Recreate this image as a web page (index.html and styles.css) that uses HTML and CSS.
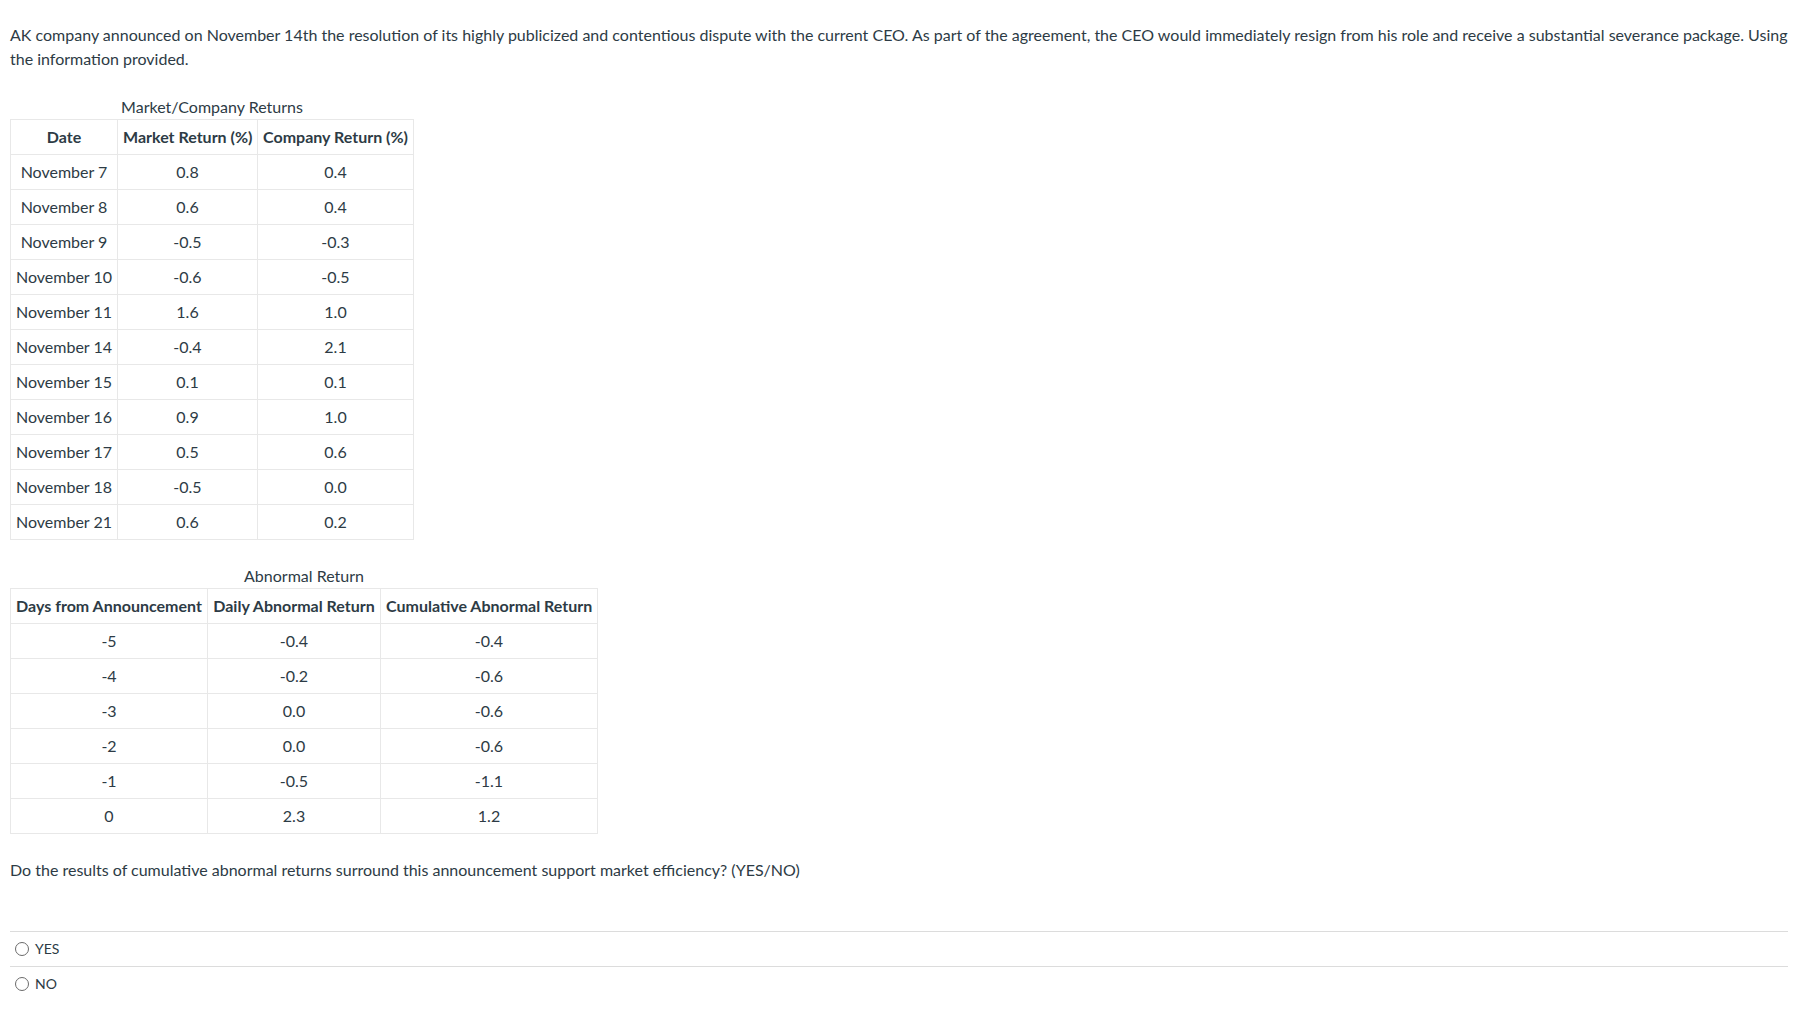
FILE: index.html
```html
<!DOCTYPE html>
<html>
<head>
<meta charset="utf-8">
<link rel="stylesheet" href="styles.css">
</head>
<body>
<div class="page">
  <p class="intro">AK company announced on November 14th the resolution of its highly publicized and contentious dispute with the current CEO. As part of the agreement, the CEO would immediately resign from his role and receive a substantial severance package. Using the information provided.</p>

  <table class="data t1">
    <caption>Market/Company Returns</caption>
    <colgroup><col class="c1"><col class="c2"><col class="c3"></colgroup>
    <thead>
      <tr><th>Date</th><th>Market Return (%)</th><th>Company Return (%)</th></tr>
    </thead>
    <tbody>
      <tr><td>November 7</td><td>0.8</td><td>0.4</td></tr>
      <tr><td>November 8</td><td>0.6</td><td>0.4</td></tr>
      <tr><td>November 9</td><td>-0.5</td><td>-0.3</td></tr>
      <tr><td>November 10</td><td>-0.6</td><td>-0.5</td></tr>
      <tr><td>November 11</td><td>1.6</td><td>1.0</td></tr>
      <tr><td>November 14</td><td>-0.4</td><td>2.1</td></tr>
      <tr><td>November 15</td><td>0.1</td><td>0.1</td></tr>
      <tr><td>November 16</td><td>0.9</td><td>1.0</td></tr>
      <tr><td>November 17</td><td>0.5</td><td>0.6</td></tr>
      <tr><td>November 18</td><td>-0.5</td><td>0.0</td></tr>
      <tr><td>November 21</td><td>0.6</td><td>0.2</td></tr>
    </tbody>
  </table>

  <table class="data t2">
    <caption>Abnormal Return</caption>
    <colgroup><col class="d1"><col class="d2"><col class="d3"></colgroup>
    <thead>
      <tr><th>Days from Announcement</th><th>Daily Abnormal Return</th><th>Cumulative Abnormal Return</th></tr>
    </thead>
    <tbody>
      <tr><td>-5</td><td>-0.4</td><td>-0.4</td></tr>
      <tr><td>-4</td><td>-0.2</td><td>-0.6</td></tr>
      <tr><td>-3</td><td>0.0</td><td>-0.6</td></tr>
      <tr><td>-2</td><td>0.0</td><td>-0.6</td></tr>
      <tr><td>-1</td><td>-0.5</td><td>-1.1</td></tr>
      <tr><td>0</td><td>2.3</td><td>1.2</td></tr>
    </tbody>
  </table>

  <p class="question">Do the results of cumulative abnormal returns surround this announcement support market efficiency? (YES/NO)</p>

  <div class="answers">
    <label class="answer"><span class="radio"></span><span class="label">YES</span></label>
    <label class="answer"><span class="radio"></span><span class="label">NO</span></label>
  </div>
</div>
</body>
</html>
```

FILE: styles.css
```css
html, body {
  margin: 0;
  padding: 0;
  background: #ffffff;
}

body {
  font-family: Lato, "Liberation Sans", sans-serif;
  font-size: 16px;
  line-height: 24px;
  color: #2d3b45;
}

.page {
  width: 1780px;
  padding: 23px 0 0 10px;
}

.intro {
  margin: 0;
}

.data {
  border-collapse: collapse;
  table-layout: fixed;
}

.data caption {
  line-height: 24px;
  text-align: center;
}

.data th,
.data td {
  border: 1px solid #e8e8e8;
  height: 34px;
  padding: 0 5px;
  text-align: center;
  vertical-align: middle;
  white-space: nowrap;
}

.data th {
  font-weight: 700;
}

.t1 {
  margin-top: 24px;
  width: 403px;
}

.t1 .c1 { width: 107px; }
.t1 .c2 { width: 140px; }
.t1 .c3 { width: 156px; }

.t2 {
  margin-top: 24px;
  width: 587px;
}

.t2 .d1 { width: 197px; }
.t2 .d2 { width: 173px; }
.t2 .d3 { width: 217px; }

.question {
  margin: 24px 0 0 0;
}

.answers {
  margin-top: 49px;
  width: 1778px;
}

.answer {
  display: flex;
  align-items: center;
  height: 34px;
  border-top: 1px solid #dcdcdc;
  font-size: 14px;
}

.answer .radio {
  width: 12px;
  height: 12px;
  border: 1px solid #6b6b6b;
  border-radius: 50%;
  margin-left: 5px;
  margin-right: 6px;
  flex: none;
}

.answer .label {
  line-height: 20px;
}
```
